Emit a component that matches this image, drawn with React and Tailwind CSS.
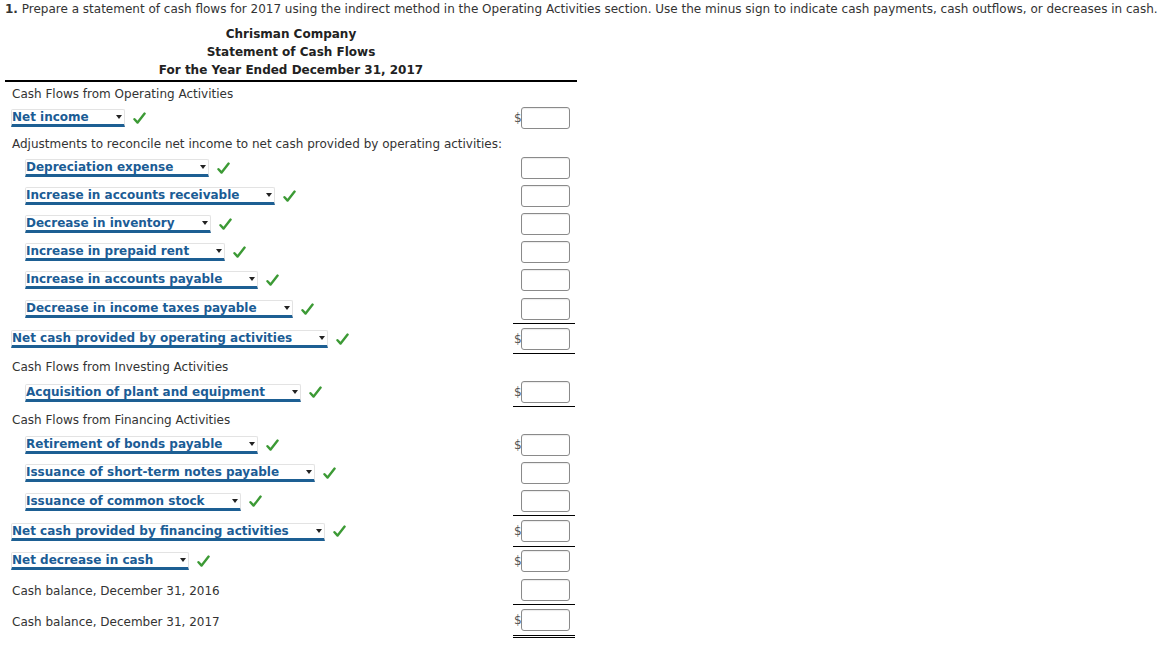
import React from "react";

const Check = () => (
  <svg width="13" height="13" viewBox="0 0 13 13" className="ml-[8px] shrink-0">
    <path d="M1.5 7.2 L4.6 10.6 L11.6 1.6" fill="none" stroke="#3c9a35" strokeWidth="2.4" strokeLinecap="round" strokeLinejoin="round" />
  </svg>
);

const Select = ({ label }) => (
  <div className="flex items-center">
    <div className="flex items-center h-[18px] border border-[#e3e3e3] border-b-[3px] border-b-[#1d5f93] rounded-t-[2px] pl-0 pr-[2px]">
      <span className="font-bold text-[#1b5c95] leading-none">{label}</span>
      <span className="w-[27px]" />
      <svg width="6" height="4" viewBox="0 0 6 4" className="shrink-0">
        <path d="M0 0 L6 0 L3 4 Z" fill="#222" />
      </svg>
    </div>
    <Check />
  </div>
);

const Amount = ({ dollar, line }) => (
  <div
    className={
      "w-[62px] h-full flex items-center " +
      (line === 1 ? "border-b border-black " : "") +
      (line === 2 ? "border-b-[3px] border-double border-black " : "")
    }
  >
    <span className="w-[8px] text-[12px] text-[#555] leading-none pl-[1px]">{dollar ? "$" : ""}</span>
    <div className="w-[49px] h-[22px] border border-[#8a8a8a] rounded-[3px] bg-white shadow-[inset_0_1px_1px_rgba(0,0,0,0.08)]" />
  </div>
);

const Row = ({ h, indent, text, children, dollar, line, amount = true }) => (
  <div className="flex" style={{ height: h }}>
    <div
      className={
        "flex-1 flex items-center whitespace-nowrap " +
        (indent ? "pl-[20px]" : text ? "pl-[7px] pt-[1px]" : "pl-[6px]")
      }
    >
      {children}
    </div>
    <div className="w-[64px] h-full flex">{amount && <Amount dollar={dollar} line={line} />}</div>
  </div>
);

export default function App() {
  return (
    <div className="bg-white min-h-[651px] text-[#333] text-[12px] px-[5px]" style={{ fontFamily: '"DejaVu Sans", Verdana, sans-serif' }}>
      <div className="h-[18px] leading-[18px] whitespace-nowrap">
        <span className="font-bold">1.</span> Prepare a statement of cash flows for 2017 using the indirect method in the Operating Activities section. Use the minus sign to indicate cash payments, cash outflows, or decreases in cash.
      </div>
      <div className="w-[572px] mt-[7px]">
        <div className="pb-[1px] border-b-2 border-black text-center font-bold leading-[18px] text-[#222]">
          <div>Chrisman Company</div>
          <div>Statement of Cash Flows</div>
          <div>For the Year Ended December 31, 2017</div>
        </div>
        <Row h={22} text amount={false}>Cash Flows from Operating Activities</Row>
        <Row h={28} dollar><Select label="Net income" /></Row>
        <Row h={22} text amount={false}>Adjustments to reconcile net income to net cash provided by operating activities:</Row>
        <Row h={28} indent><Select label="Depreciation expense" /></Row>
        <Row h={28} indent><Select label="Increase in accounts receivable" /></Row>
        <Row h={28} indent><Select label="Decrease in inventory" /></Row>
        <Row h={28} indent><Select label="Increase in prepaid rent" /></Row>
        <Row h={28} indent><Select label="Increase in accounts payable" /></Row>
        <Row h={30} indent line={1}><Select label="Decrease in income taxes payable" /></Row>
        <Row h={30} dollar line={1}><Select label="Net cash provided by operating activities" /></Row>
        <Row h={24} text amount={false}>Cash Flows from Investing Activities</Row>
        <Row h={29} indent dollar line={1}><Select label="Acquisition of plant and equipment" /></Row>
        <Row h={24} text amount={false}>Cash Flows from Financing Activities</Row>
        <Row h={28} indent dollar><Select label="Retirement of bonds payable" /></Row>
        <Row h={28} indent><Select label="Issuance of short-term notes payable" /></Row>
        <Row h={29} indent line={1}><Select label="Issuance of common stock" /></Row>
        <Row h={31} dollar line={1}><Select label="Net cash provided by financing activities" /></Row>
        <Row h={28} dollar><Select label="Net decrease in cash" /></Row>
        <Row h={30} text line={1}>Cash balance, December 31, 2016</Row>
        <Row h={33} text dollar line={2}>Cash balance, December 31, 2017</Row>
      </div>
    </div>
  );
}
